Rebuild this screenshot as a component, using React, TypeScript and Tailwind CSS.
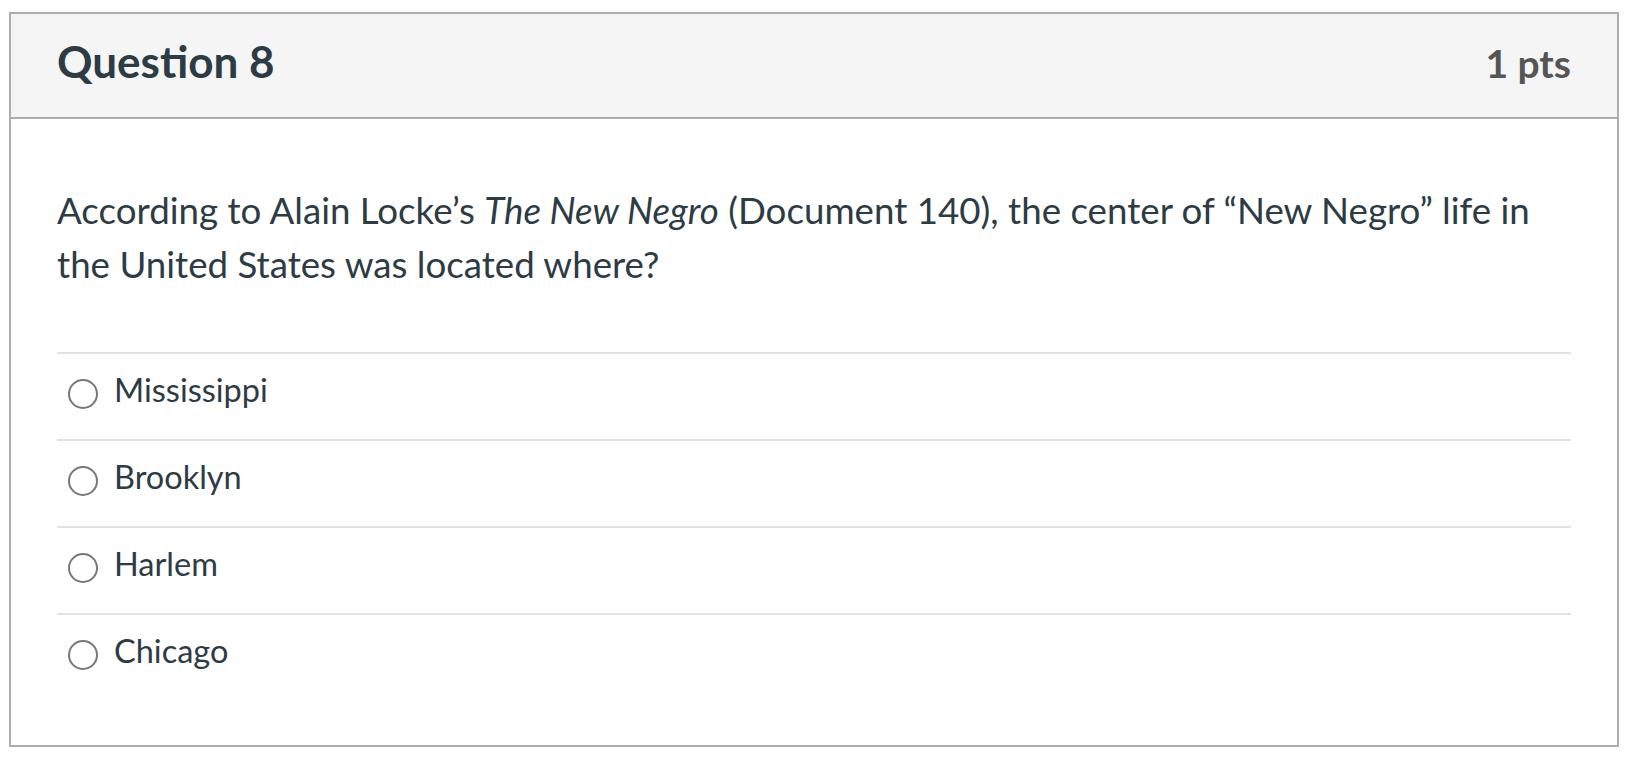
const ANSWERS = ["Mississippi", "Brooklyn", "Harlem", "Chicago"];

export default function App() {
  return (
    <div className="min-h-screen bg-white pl-[9px] pt-[12px] font-['Lato','Liberation_Sans',sans-serif] text-[#2d3b45]">
      <div className="w-[1610px] border-2 border-[#adadad]">
        <div className="flex h-[105px] items-baseline justify-between border-b-2 border-[#adadad] bg-[#f5f5f5] px-[46px] pt-[21px]">
          <h2 className="text-[44px] leading-[1.2] font-bold">Question 8</h2>
          <span className="text-[39px] leading-[1.2] font-bold text-[#555]">1 pts</span>
        </div>

        <div className="px-[46px] pt-[64px] pb-[45px]">
          <p className="max-w-[1500px] text-[36.7px] leading-[54px]">
            According to Alain Locke’s <em>The New Negro</em> (Document 140), the center of “New Negro” life in
            the United States was located where?
          </p>

          <div className="mt-[61px]">
            {ANSWERS.map((a) => (
              <label key={a} className="flex h-[87px] items-center border-t-2 border-[#e2e2e2] pb-[5px]">
                <span className="ml-[11px] h-[30px] w-[30px] shrink-0 rounded-full border-2 border-[#777]" />
                <span className="ml-[16px] pb-[8px] text-[32.5px] leading-[40px]">{a}</span>
              </label>
            ))}
          </div>
        </div>
      </div>
    </div>
  );
}
